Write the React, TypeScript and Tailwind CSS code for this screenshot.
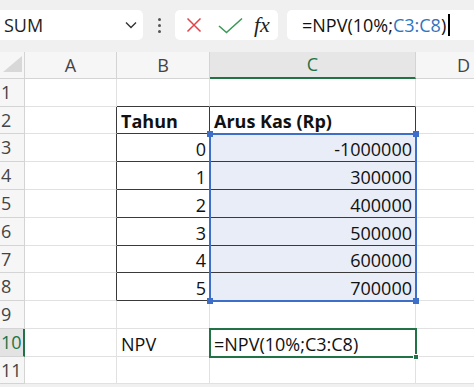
import React from "react";

const FONT = { fontFamily: '"Open Sans", "Noto Sans", sans-serif' };

type Cell = { text?: string; bold?: boolean; align?: "l" | "r"; };
type Row = { h: number; b?: Cell; c?: Cell };

const rows: Row[] = [
  { h: 28 },
  { h: 27, b: { text: "Tahun", bold: true, align: "l" }, c: { text: "Arus Kas (Rp)", bold: true, align: "l" } },
  { h: 28, b: { text: "0", align: "r" }, c: { text: "-1000000", align: "r" } },
  { h: 28, b: { text: "1", align: "r" }, c: { text: "300000", align: "r" } },
  { h: 28, b: { text: "2", align: "r" }, c: { text: "400000", align: "r" } },
  { h: 28, b: { text: "3", align: "r" }, c: { text: "500000", align: "r" } },
  { h: 27, b: { text: "4", align: "r" }, c: { text: "600000", align: "r" } },
  { h: 28, b: { text: "5", align: "r" }, c: { text: "700000", align: "r" } },
  { h: 28 },
  { h: 28, b: { text: "NPV", align: "l" }, c: { text: "=NPV(10%;C3:C8)", align: "l" } },
  { h: 27 },
];

function CellView({ cell, className }: { cell?: Cell; className: string }) {
  return (
    <div
      className={
        "flex h-full items-center overflow-visible whitespace-nowrap text-[18px] text-[#111] " +
        (cell?.align === "r" ? "justify-end pr-[3px] " : "justify-start pl-[4px] ") +
        (cell?.bold ? "font-bold " : "") +
        className
      }
    >
      <span className="pt-[3px]">{cell?.text ?? ""}</span>
    </div>
  );
}

export default function App() {
  return (
    <div className="w-[474px] h-[387px] overflow-hidden bg-[#f0f0f0]" style={FONT}>
      {/* Top bar */}
      <div className="flex h-[52px] items-start pt-[10px] bg-[#f0f0f0]">
        <div className="flex h-[30px] w-[143px] items-center justify-between rounded-r-[5px] bg-white pl-[4px] pr-[6px]">
          <span className="text-[18px] text-[#1e1e1e]">SUM</span>
          <svg width="12" height="8" viewBox="0 0 12 8">
            <path d="M1 1.5 L6 6.5 L11 1.5" fill="none" stroke="#333" strokeWidth="1.4" />
          </svg>
        </div>
        <div className="flex h-[30px] w-[32px] flex-col items-center justify-center gap-[3px]">
          <span className="block h-[3px] w-[3px] rounded-full bg-[#555]" />
          <span className="block h-[3px] w-[3px] rounded-full bg-[#555]" />
          <span className="block h-[3px] w-[3px] rounded-full bg-[#555]" />
        </div>
        <div className="flex h-[30px] w-[103px] items-center rounded-[5px] bg-white">
          <svg className="ml-[11px]" width="16" height="16" viewBox="0 0 16 16">
            <path d="M1.5 1.5 L14.5 14.5 M14.5 1.5 L1.5 14.5" stroke="#e0424a" strokeWidth="1.5" fill="none" />
          </svg>
          <svg className="ml-[16px]" width="25" height="17" viewBox="0 0 25 17">
            <path d="M1 9 L8.5 15.5 L24 1.5" stroke="#3c9a57" strokeWidth="1.6" fill="none" />
          </svg>
          <span
            className="ml-[11px] text-[22px] italic leading-none text-[#222]"
            style={{ fontFamily: '"Liberation Serif", "DejaVu Serif", serif' }}
          >
            fx
          </span>
        </div>
        <div className="ml-[9px] flex h-[30px] flex-1 items-center rounded-l-[5px] bg-white pl-[15px]">
          <span className="text-[18px] text-[#111] whitespace-nowrap">
            =NPV(10%;<span className="text-[#2f75c0]">C3:C8</span>)
          </span>
          <span className="ml-[2px] block h-[22px] w-[1.5px] bg-black" />
        </div>
      </div>

      {/* Column headers */}
      <div className="flex h-[27px] text-[18px] text-[#444]">
        <div className="relative w-[25px] border-r border-b border-[#d4d4d4] bg-[#f6f6f6]">
          <svg className="absolute left-[3px] top-[4px]" width="19" height="16" viewBox="0 0 19 16">
            <path d="M19 0 L19 16 L0 16 Z" fill="#d8d8d8" />
          </svg>
        </div>
        <div className="flex w-[92px] items-center justify-center border-r border-b border-[#d4d4d4] bg-[#f6f6f6]">A</div>
        <div className="flex w-[93px] items-center justify-center border-r border-b border-[#d4d4d4] bg-[#f6f6f6]">B</div>
        <div className="flex w-[206px] items-center justify-center border-r border-[#d4d4d4] border-b-2 border-b-[#217346] bg-[#e6e6e6] text-[#217346]">C</div>
        <div className="flex flex-1 items-center justify-start pl-[41px] border-b border-[#d4d4d4] bg-[#f6f6f6]">D</div>
      </div>

      {/* Body */}
      <div className="relative bg-white">
        {rows.map((r, i) => {
          const n = i + 1;
          const inTable = n >= 2 && n <= 8;
          const active = n === 10;
          return (
            <div key={n} className="flex" style={{ height: r.h }}>
              <div
                className={
                  "flex w-[25px] items-center pl-[1px] text-[18px] border-b " +
                  (active
                    ? "bg-[#e3e3e3] text-[#217346] border-r-2 border-r-[#217346] border-b-[#d4d4d4]"
                    : "bg-[#f6f6f6] text-[#444] border-r border-[#d4d4d4]")
                }
              >
                {n}
              </div>
              <div
                className={
                  "w-[92px] border-b border-b-[#e1e1e1] border-r " +
                  (inTable ? "border-r-[#3a3a3a]" : "border-r-[#e1e1e1]")
                }
              />
              <CellView
                cell={r.b}
                className={
                  "w-[93px] border-r border-b " +
                  (inTable ? "border-r-[#3a3a3a] " : "border-r-[#e1e1e1] ") +
                  (n >= 1 && n <= 8 ? "border-b-[#3a3a3a]" : "border-b-[#e1e1e1]")
                }
              />
              <CellView
                cell={r.c}
                className={
                  "w-[206px] border-r border-b " +
                  (inTable ? "border-r-[#3a3a3a] " : "border-r-[#e1e1e1] ") +
                  (n >= 1 && n <= 8 ? "border-b-[#3a3a3a] " : "border-b-[#e1e1e1] ") +
                  (n >= 3 && n <= 8 ? "bg-[#e8edf7]" : "")
                }
              />
              <div className="flex-1 border-b border-[#e1e1e1]" />
            </div>
          );
        })}

        {/* Reference range highlight C3:C8 */}
        <div className="pointer-events-none absolute left-[209px] top-[54px] h-[169px] w-[208px] border-2 border-[#3e6fc8]">
          <span className="absolute -left-[4px] -top-[4px] h-[6px] w-[6px] bg-[#3e6fc8]" />
          <span className="absolute -right-[4px] -top-[4px] h-[6px] w-[6px] bg-[#3e6fc8]" />
          <span className="absolute -left-[4px] -bottom-[4px] h-[6px] w-[6px] bg-[#3e6fc8]" />
          <span className="absolute -right-[4px] -bottom-[4px] h-[6px] w-[6px] bg-[#3e6fc8]" />
        </div>

        {/* Active cell C10 */}
        <div className="pointer-events-none absolute left-[209px] top-[249px] h-[30px] w-[208px] border-2 border-[#217346]">
          <span className="absolute -right-[4px] -bottom-[4px] h-[6px] w-[6px] border border-white bg-[#217346]" />
        </div>
      </div>
    </div>
  );
}
